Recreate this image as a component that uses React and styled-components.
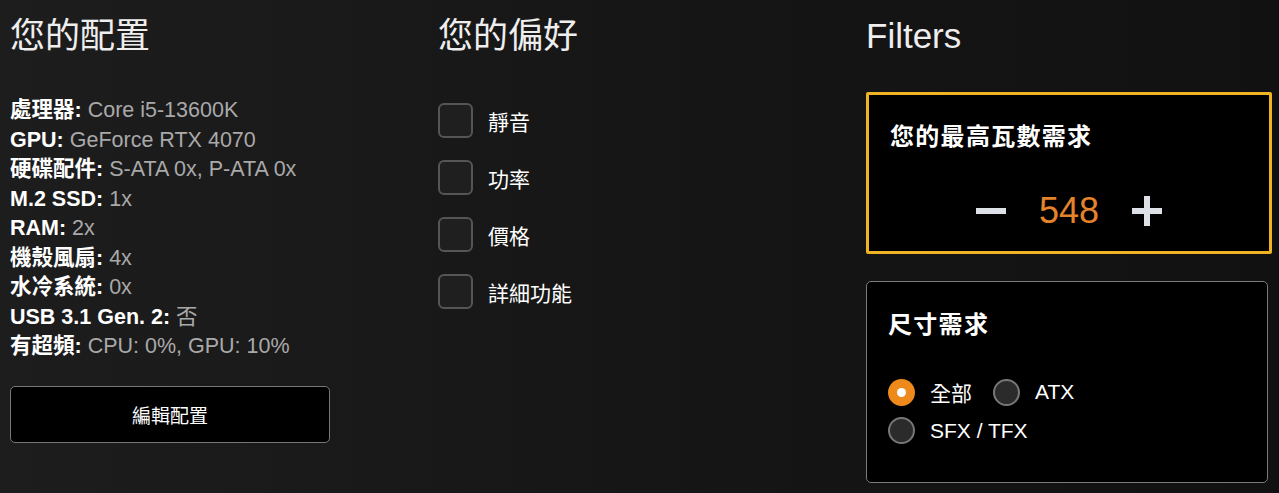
import React from "react";
import styled, { createGlobalStyle } from "styled-components";

const GlobalStyle = createGlobalStyle`
  html, body {
    margin: 0;
    padding: 0;
    height: 100%;
  }
  body {
    background: linear-gradient(90deg, #1e1d1e 0%, #161616 50%, #111111 100%);
    color: #eeeeee;
    font-family: "Liberation Sans", "Noto Sans CJK TC", sans-serif;
  }
`;

const Page = styled.div`
  display: grid;
  grid-template-columns: repeat(3, 406px);
  column-gap: 22px;
  padding: 0 0 0 10px;
  height: 493px;
  box-sizing: border-box;
  overflow: hidden;
`;

const Column = styled.section`
  display: flex;
  flex-direction: column;
  align-items: flex-start;
`;

const Heading = styled.h2`
  margin: 16px 0 0;
  font-size: 35px;
  line-height: 40px;
  font-weight: 400;
  color: #eeeeee;
`;

const SpecList = styled.ul`
  list-style: none;
  margin: 40px 0 0;
  padding: 0;
`;

const SpecItem = styled.li`
  font-size: 21.5px;
  line-height: 29.5px;
  color: #a9a9a9;
  white-space: nowrap;

  b {
    color: #ffffff;
    font-weight: 700;
  }
`;

const EditButton = styled.button`
  margin-top: 24px;
  width: 320px;
  height: 57px;
  background: #000000;
  border: 1.5px solid #777777;
  border-radius: 5px;
  color: #ffffff;
  font-family: inherit;
  font-size: 19px;
  cursor: pointer;
`;

const CheckList = styled.div`
  margin-top: 47px;
  display: flex;
  flex-direction: column;
  gap: 22px;
`;

const CheckRow = styled.label`
  display: flex;
  align-items: center;
  gap: 15px;
  font-size: 21px;
  color: #ffffff;
  cursor: pointer;
`;

const CheckBox = styled.span`
  width: 35px;
  height: 35px;
  box-sizing: border-box;
  border: 2px solid #555555;
  border-radius: 6px;
  background: #1f1f1f;
`;

const FilterCard = styled.div`
  width: ${p => p.$width}px;
  box-sizing: border-box;
  margin-top: ${p => p.$top}px;
  background: #000000;
  border: ${p => (p.$active ? "3px solid #f0b323" : "1.5px solid #7a7a7a")};
  border-radius: ${p => (p.$active ? "2px" : "5px")};
  padding: ${p => p.$pad};
`;

const CardTitle = styled.h3`
  margin: 0;
  font-size: 24px;
  line-height: 28px;
  font-weight: 700;
  letter-spacing: 1.3px;
  color: #ffffff;
`;

const Stepper = styled.div`
  margin-top: 40px;
  display: flex;
  align-items: center;
  justify-content: center;
  gap: 33px;
  height: 40px;
`;

const StepButton = styled.button`
  background: none;
  border: none;
  padding: 0;
  display: flex;
  cursor: pointer;
`;

const StepValue = styled.span`
  font-size: 36px;
  color: #e5832b;
`;

const RadioGroup = styled.div`
  margin-top: 38px;
  display: flex;
  flex-direction: column;
  gap: 10px;
`;

const RadioRow = styled.div`
  display: flex;
  align-items: center;
  gap: 21px;
`;

const RadioOption = styled.label`
  display: flex;
  align-items: center;
  gap: 15px;
  font-size: 21px;
  color: #ffffff;
  cursor: pointer;
`;

const RadioDot = styled.span`
  width: 27px;
  height: 27px;
  box-sizing: border-box;
  border-radius: 50%;
  border: ${p => (p.$checked ? "none" : "2px solid #777777")};
  background: ${p => (p.$checked ? "#ee8a1c" : "#2b2b2b")};
  display: flex;
  align-items: center;
  justify-content: center;

  &::after {
    content: "";
    display: ${p => (p.$checked ? "block" : "none")};
    width: 9px;
    height: 9px;
    border-radius: 50%;
    background: #ffffff;
  }
`;

const specs = [
  ["處理器:", "Core i5-13600K"],
  ["GPU:", "GeForce RTX 4070"],
  ["硬碟配件:", "S-ATA 0x, P-ATA 0x"],
  ["M.2 SSD:", "1x"],
  ["RAM:", "2x"],
  ["機殼風扇:", "4x"],
  ["水冷系統:", "0x"],
  ["USB 3.1 Gen. 2:", "否"],
  ["有超頻:", "CPU: 0%, GPU: 10%"],
];

const prefs = ["靜音", "功率", "價格", "詳細功能"];

const MinusIcon = () => (
  <svg width="30" height="30" viewBox="0 0 30 30">
    <rect x="0" y="12" width="30" height="6" fill="#dde0e6" />
  </svg>
);

const PlusIcon = () => (
  <svg width="30" height="30" viewBox="0 0 30 30">
    <rect x="0" y="12" width="30" height="6" fill="#dde0e6" />
    <rect x="12" y="0" width="6" height="30" fill="#dde0e6" />
  </svg>
);

function App() {
  return (
    <>
      <GlobalStyle />
      <Page>
        <Column>
          <Heading>您的配置</Heading>
          <SpecList>
            {specs.map(([label, value]) => (
              <SpecItem key={label}>
                <b>{label}</b> {value}
              </SpecItem>
            ))}
          </SpecList>
          <EditButton>編輯配置</EditButton>
        </Column>

        <Column>
          <Heading>您的偏好</Heading>
          <CheckList>
            {prefs.map(p => (
              <CheckRow key={p}>
                <CheckBox />
                {p}
              </CheckRow>
            ))}
          </CheckList>
        </Column>

        <Column>
          <Heading>Filters</Heading>
          <FilterCard $active $width={406} $top={36} $pad="28px 21px 20px">
            <CardTitle>您的最高瓦數需求</CardTitle>
            <Stepper>
              <StepButton aria-label="decrease">
                <MinusIcon />
              </StepButton>
              <StepValue>548</StepValue>
              <StepButton aria-label="increase">
                <PlusIcon />
              </StepButton>
            </Stepper>
          </FilterCard>
          <FilterCard $width={402} $top={27} $pad="29px 21px 38px">
            <CardTitle>尺寸需求</CardTitle>
            <RadioGroup>
              <RadioRow>
                <RadioOption>
                  <RadioDot $checked />
                  全部
                </RadioOption>
                <RadioOption>
                  <RadioDot />
                  ATX
                </RadioOption>
              </RadioRow>
              <RadioRow>
                <RadioOption>
                  <RadioDot />
                  SFX / TFX
                </RadioOption>
              </RadioRow>
            </RadioGroup>
          </FilterCard>
        </Column>
      </Page>
    </>
  );
}

export default App;
